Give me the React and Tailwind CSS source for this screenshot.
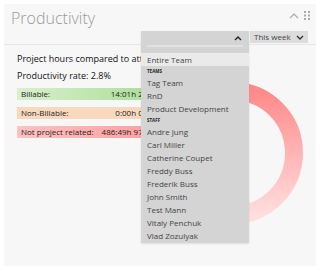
import React from "react";

const items = [
  { t: "Entire Team", active: true },
  { t: "TEAMS", h: true },
  { t: "Tag Team" },
  { t: "RnD" },
  { t: "Product Development" },
  { t: "STAFF", h: true },
  { t: "Andre Jung" },
  { t: "Carl Miller" },
  { t: "Catherine Coupet" },
  { t: "Freddy Buss" },
  { t: "Frederik Buss" },
  { t: "John Smith" },
  { t: "Test Mann" },
  { t: "Vitaly Penchuk" },
  { t: "Vlad Zozulyak" },
];

export default function App() {
  return (
    <div className="w-[320px] h-[272px] bg-white p-1 font-['Open_Sans',sans-serif] relative overflow-hidden">
      <div className="w-[312px] h-[262px] bg-[#f7f7f7] relative">
        <div className="h-[41px] border-b border-[#e6e6e6] relative">
          <div className="pl-[7px] pt-[3px] text-[16px] font-light text-[#999] leading-[22px]">Productivity</div>
          <div className="absolute right-[6px] top-[7px] flex items-center gap-[5px]">
            <svg width="10" height="7" viewBox="0 0 10 7"><path d="M1 6 L5 2 L9 6" fill="none" stroke="#aaa" strokeWidth="1.2" /></svg>
            <svg width="6" height="9" viewBox="0 0 6 9" fill="#aaa">
              <rect x="0" y="0" width="2" height="2" /><rect x="4" y="0" width="2" height="2" />
              <rect x="0" y="3.5" width="2" height="2" /><rect x="4" y="3.5" width="2" height="2" />
              <rect x="0" y="7" width="2" height="2" /><rect x="4" y="7" width="2" height="2" />
            </svg>
          </div>
          <div className="absolute left-[246px] top-[27px] w-[58px] h-[12px] bg-[#dcdcdc] flex items-center justify-between px-[4px] text-[8px] text-[#444]">
            <span>This week</span>
            <svg width="8" height="5" viewBox="0 0 8 5"><path d="M1 1 L4 4 L7 1" fill="none" stroke="#333" strokeWidth="1.4" /></svg>
          </div>
        </div>
        <div className="flex">
          <div className="w-[160px] shrink-0 pl-[13px] pt-[6px] whitespace-nowrap">
            <div className="text-[9px] text-[#111] leading-[15px]">Project hours compared to attendance</div>
            <div className="text-[9px] text-[#111] leading-[15px] mt-[2px]">Productivity rate: 2.8%</div>
            <div className="mt-[5px] w-[143px] h-[12px] bg-gradient-to-r from-[#d9f0cc] to-[#a8dd94] flex justify-between items-center px-[4px] text-[8px] text-[#222]">
              <span>Billable:</span><span>14:01h 2.8%</span>
            </div>
            <div className="mt-[7px] w-[143px] h-[12px] bg-[#f8d9bd] flex justify-between items-center px-[4px] text-[8px] text-[#222]">
              <span>Non-Billable:</span><span>0:00h 0.0%</span>
            </div>
            <div className="mt-[7px] w-[143px] h-[12px] bg-gradient-to-r from-[#ffc2c2] to-[#ff9e9e] flex justify-between items-center px-[4px] text-[8px] text-[#222]">
              <span>Not project related:</span><span>486:49h 97.2%</span>
            </div>
          </div>
          <div className="flex-1 pt-[34px]">
            <svg width="150" height="150" viewBox="0 0 150 150" className="-ml-[8px]">
              <defs>
                <linearGradient id="g" x1="0" y1="0" x2="0" y2="1">
                  <stop offset="0" stopColor="#ff8a8a" />
                  <stop offset="1" stopColor="#ffdede" />
                </linearGradient>
              </defs>
              <circle cx="76" cy="74" r="62" fill="none" stroke="url(#g)" strokeWidth="18" />
            </svg>
          </div>
        </div>
        <div className="absolute left-[137px] top-[27px] w-[108px] bg-[#d4d4d4] shadow-[0_1px_2px_rgba(0,0,0,0.1)]">
          <div className="h-[22px] relative">
            <svg className="absolute right-[7px] top-[5px]" width="8" height="5" viewBox="0 0 8 5"><path d="M1 4 L4 1 L7 4" fill="none" stroke="#222" strokeWidth="1.4" /></svg>
            <div className="absolute left-[6px] right-[6px] top-[14px] h-[2px] bg-[#e2e2e2]" />
          </div>
          <div className="pb-[1px]">
            {items.map((it) =>
              it.h ? (
                <div key={it.t} className="px-[6px] h-[10px] leading-[10px] text-[4.5px] font-bold text-[#222]">{it.t}</div>
              ) : (
                <div key={it.t} className={"px-[6px] h-[13px] leading-[13px] text-[8px] text-[#444] whitespace-nowrap " + (it.active ? "bg-[#eaeaea]" : "")}>{it.t}</div>
              )
            )}
          </div>
        </div>
      </div>
    </div>
  );
}
